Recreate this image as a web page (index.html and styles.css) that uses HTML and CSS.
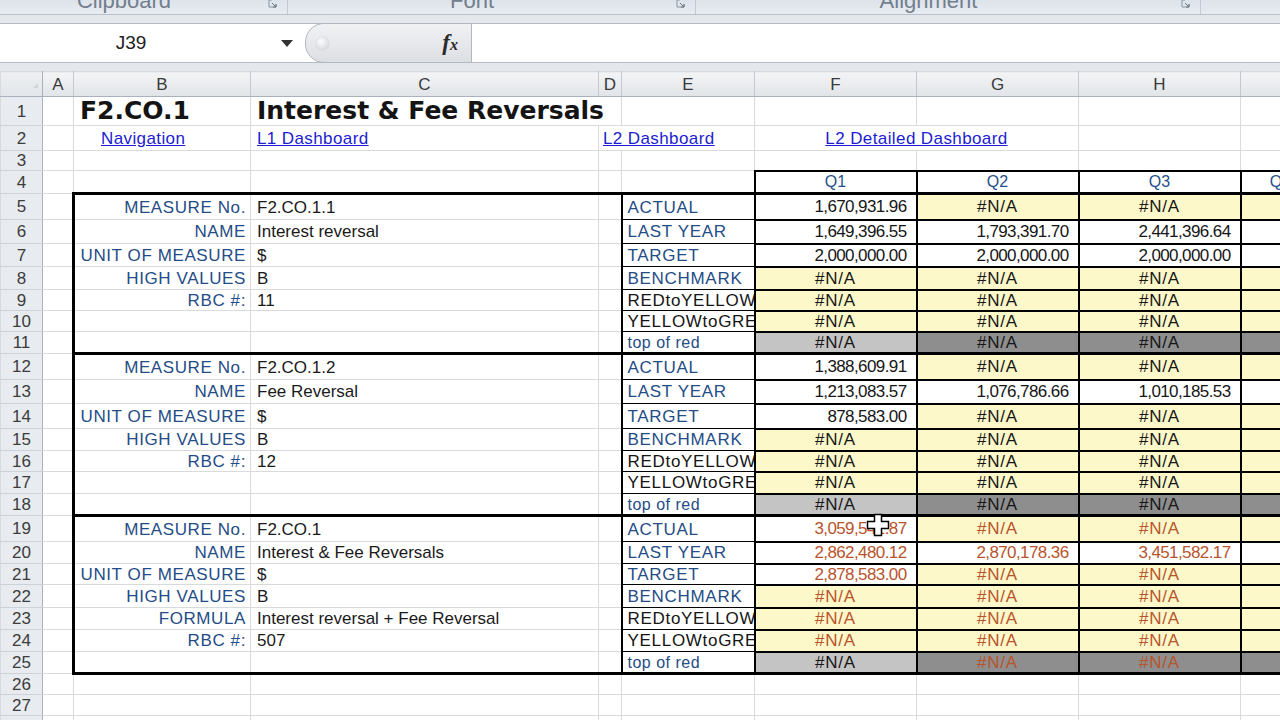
FILE: index.html
```html
<!DOCTYPE html>
<html>
<head>
<meta charset="utf-8">
<link rel="stylesheet" href="styles.css">
</head>
<body>
<div class="app">
  <div class="ribbon">
    <div class="grp g-clip"><span class="glabel">Clipboard</span><svg class="launch" viewBox="0 0 9 9"><path d="M1 1h3M1 1v7h7V5" fill="none" stroke="#8a929e" stroke-width="1"/><path d="M4 4l4 4M8 5v3H5" fill="none" stroke="#6d7582" stroke-width="1"/></svg></div>
    <div class="grp g-font"><span class="glabel">Font</span><svg class="launch" viewBox="0 0 9 9"><path d="M1 1h3M1 1v7h7V5" fill="none" stroke="#8a929e" stroke-width="1"/><path d="M4 4l4 4M8 5v3H5" fill="none" stroke="#6d7582" stroke-width="1"/></svg></div>
    <div class="grp g-align"><span class="glabel">Alignment</span><svg class="launch" viewBox="0 0 9 9"><path d="M1 1h3M1 1v7h7V5" fill="none" stroke="#8a929e" stroke-width="1"/><path d="M4 4l4 4M8 5v3H5" fill="none" stroke="#6d7582" stroke-width="1"/></svg></div>
    <div class="grp g-rest"></div>
  </div>
  <div class="gap1"></div>
  <div class="fbar">
    <div class="namebox"><span class="ref">J39</span><span class="arrow"></span></div>
    <div class="pill"><span class="dot"></span><span class="fx"><i>f</i><i class="fxx">x</i></span></div>
    <div class="finput"></div>
  </div>
  <div class="gap2"></div>
  <div class="sheet">
    <table class="grid">
      <colgroup>
        <col class="c-rh"><col class="c-a"><col class="c-b"><col class="c-c"><col class="c-d"><col class="c-e"><col class="c-f"><col class="c-g"><col class="c-h"><col class="c-i">
      </colgroup>
      <tr class="hdr">
        <td class="corner"><span class="tri"></span></td><td class="ch">A</td><td class="ch">B</td><td class="ch">C</td><td class="ch">D</td><td class="ch">E</td><td class="ch">F</td><td class="ch">G</td><td class="ch">H</td><td class="ch"></td>
      </tr>
      <tr class="h28">
        <td class="rh">1</td><td></td><td class="title">F2.CO.1</td><td class="title" colspan="2">Interest &amp; Fee Reversals</td><td></td><td></td><td></td><td></td><td></td>
      </tr>
      <tr class="h25">
        <td class="rh">2</td><td></td><td class="lnk l-nav"><u>Navigation</u></td><td class="lnk l-c"><u>L1 Dashboard</u></td><td class="lnk l-d" colspan="2"><u>L2 Dashboard</u></td><td class="lnk l-mid" colspan="2"><u>L2 Detailed Dashboard</u></td><td></td><td></td>
      </tr>
      <tr class="h20">
        <td class="rh">3</td><td></td><td></td><td></td><td></td><td></td><td></td><td></td><td></td><td></td>
      </tr>
      <tr class="h23 qrow">
        <td class="rh">4</td><td></td><td></td><td></td><td></td><td></td><td class="q">Q1</td><td class="q">Q2</td><td class="q">Q3</td><td class="q">Q4</td>
      </tr>

      <tr class="h26 blk bt">
        <td class="rh">5</td><td></td><td class="lbl">MEASURE No.</td><td class="val">F2.CO.1.1</td><td></td><td class="el">ACTUAL</td><td class="num">1,670,931.96</td><td class="na y">#N/A</td><td class="na y">#N/A</td><td class="y"></td>
      </tr>
      <tr class="h24 blk">
        <td class="rh">6</td><td></td><td class="lbl">NAME</td><td class="val">Interest reversal</td><td></td><td class="el">LAST YEAR</td><td class="num">1,649,396.55</td><td class="num">1,793,391.70</td><td class="num">2,441,396.64</td><td></td>
      </tr>
      <tr class="h23 blk">
        <td class="rh">7</td><td></td><td class="lbl">UNIT OF MEASURE</td><td class="val">$</td><td></td><td class="el">TARGET</td><td class="num">2,000,000.00</td><td class="num">2,000,000.00</td><td class="num">2,000,000.00</td><td></td>
      </tr>
      <tr class="h23 blk">
        <td class="rh">8</td><td></td><td class="lbl">HIGH VALUES</td><td class="val">B</td><td></td><td class="el">BENCHMARK</td><td class="na y">#N/A</td><td class="na y">#N/A</td><td class="na y">#N/A</td><td class="y"></td>
      </tr>
      <tr class="h21 blk">
        <td class="rh">9</td><td></td><td class="lbl">RBC #:</td><td class="val">11</td><td></td><td class="el ek">REDtoYELLOW</td><td class="na y">#N/A</td><td class="na y">#N/A</td><td class="na y">#N/A</td><td class="y"></td>
      </tr>
      <tr class="h21 blk">
        <td class="rh">10</td><td></td><td class="lbl"></td><td></td><td></td><td class="el ek">YELLOWtoGREEN</td><td class="na y">#N/A</td><td class="na y">#N/A</td><td class="na y">#N/A</td><td class="y"></td>
      </tr>
      <tr class="h22 blk">
        <td class="rh">11</td><td></td><td class="lbl"></td><td></td><td></td><td class="el small">top of red</td><td class="na g1">#N/A</td><td class="na g2">#N/A</td><td class="na g2">#N/A</td><td class="g2"></td>
      </tr>

      <tr class="h26 blk bt">
        <td class="rh">12</td><td></td><td class="lbl">MEASURE No.</td><td class="val">F2.CO.1.2</td><td></td><td class="el">ACTUAL</td><td class="num">1,388,609.91</td><td class="na y">#N/A</td><td class="na y">#N/A</td><td class="y"></td>
      </tr>
      <tr class="h24 blk">
        <td class="rh">13</td><td></td><td class="lbl">NAME</td><td class="val">Fee Reversal</td><td></td><td class="el">LAST YEAR</td><td class="num">1,213,083.57</td><td class="num">1,076,786.66</td><td class="num">1,010,185.53</td><td></td>
      </tr>
      <tr class="h25 blk">
        <td class="rh">14</td><td></td><td class="lbl">UNIT OF MEASURE</td><td class="val">$</td><td></td><td class="el">TARGET</td><td class="num">878,583.00</td><td class="na y">#N/A</td><td class="na y">#N/A</td><td class="y"></td>
      </tr>
      <tr class="h22 blk">
        <td class="rh">15</td><td></td><td class="lbl">HIGH VALUES</td><td class="val">B</td><td></td><td class="el">BENCHMARK</td><td class="na y">#N/A</td><td class="na y">#N/A</td><td class="na y">#N/A</td><td class="y"></td>
      </tr>
      <tr class="h21 blk">
        <td class="rh">16</td><td></td><td class="lbl">RBC #:</td><td class="val">12</td><td></td><td class="el ek">REDtoYELLOW</td><td class="na y">#N/A</td><td class="na y">#N/A</td><td class="na y">#N/A</td><td class="y"></td>
      </tr>
      <tr class="h22 blk">
        <td class="rh">17</td><td></td><td class="lbl"></td><td></td><td></td><td class="el ek">YELLOWtoGREEN</td><td class="na y">#N/A</td><td class="na y">#N/A</td><td class="na y">#N/A</td><td class="y"></td>
      </tr>
      <tr class="h22 blk">
        <td class="rh">18</td><td></td><td class="lbl"></td><td></td><td></td><td class="el small">top of red</td><td class="na g1">#N/A</td><td class="na g2">#N/A</td><td class="na g2">#N/A</td><td class="g2"></td>
      </tr>

      <tr class="h26 blk bt">
        <td class="rh">19</td><td></td><td class="lbl">MEASURE No.</td><td class="val">F2.CO.1</td><td></td><td class="el">ACTUAL</td><td class="num or">3,059,541.87</td><td class="na y or">#N/A</td><td class="na y or">#N/A</td><td class="y"></td>
      </tr>
      <tr class="h22 blk">
        <td class="rh">20</td><td></td><td class="lbl">NAME</td><td class="val">Interest &amp; Fee Reversals</td><td></td><td class="el">LAST YEAR</td><td class="num or">2,862,480.12</td><td class="num or">2,870,178.36</td><td class="num or">3,451,582.17</td><td></td>
      </tr>
      <tr class="h20 blk">
        <td class="rh">21</td><td></td><td class="lbl">UNIT OF MEASURE</td><td class="val">$</td><td></td><td class="el">TARGET</td><td class="num or">2,878,583.00</td><td class="na y or">#N/A</td><td class="na y or">#N/A</td><td class="y"></td>
      </tr>
      <tr class="h23 blk">
        <td class="rh">22</td><td></td><td class="lbl">HIGH VALUES</td><td class="val">B</td><td></td><td class="el">BENCHMARK</td><td class="na y or">#N/A</td><td class="na y or">#N/A</td><td class="na y or">#N/A</td><td class="y"></td>
      </tr>
      <tr class="h22 blk">
        <td class="rh">23</td><td></td><td class="lbl">FORMULA</td><td class="val">Interest reversal + Fee Reversal</td><td></td><td class="el ek">REDtoYELLOW</td><td class="na y or">#N/A</td><td class="na y or">#N/A</td><td class="na y or">#N/A</td><td class="y"></td>
      </tr>
      <tr class="h22 blk">
        <td class="rh">24</td><td></td><td class="lbl">RBC #:</td><td class="val">507</td><td></td><td class="el ek">YELLOWtoGREEN</td><td class="na y or">#N/A</td><td class="na y or">#N/A</td><td class="na y or">#N/A</td><td class="y"></td>
      </tr>
      <tr class="h22 blk bb">
        <td class="rh">25</td><td></td><td class="lbl"></td><td></td><td></td><td class="el small">top of red</td><td class="na g1">#N/A</td><td class="na g2 or">#N/A</td><td class="na g2 or">#N/A</td><td class="g2"></td>
      </tr>

      <tr class="h21">
        <td class="rh">26</td><td></td><td></td><td></td><td></td><td></td><td></td><td></td><td></td><td></td>
      </tr>
      <tr class="h21">
        <td class="rh">27</td><td></td><td></td><td></td><td></td><td></td><td></td><td></td><td></td><td></td>
      </tr>
      <tr class="h21">
        <td class="rh">28</td><td></td><td></td><td></td><td></td><td></td><td></td><td></td><td></td><td></td>
      </tr>
    </table>
  </div>
  <svg class="cursor" viewBox="0 0 24 24" width="24" height="24"><path d="M8.5 1.5h7v7h7v7h-7v7h-7v-7h-7v-7h7z" fill="#fff" stroke="#000" stroke-width="1.5" stroke-linejoin="miter"/></svg>
</div>
</body>
</html>
```

FILE: styles.css
```css
html, body {
  margin: 0;
  padding: 0;
  background: #fff;
}
body {
  font-family: "Liberation Sans", Arial, sans-serif;
}
.app {
  position: relative;
  width: 1280px;
  height: 720px;
  overflow: hidden;
  background: #fff;
}

/* ribbon group captions */
.ribbon {
  display: flex;
  height: 14px;
  overflow: hidden;
  background: linear-gradient(#dde3ea, #e8ecf1);
  border-bottom: 1px solid #b7bfca;
}
.grp {
  display: flex;
  align-items: flex-end;
  height: 14px;
  border-right: 1px solid #c2c9d3;
  box-sizing: border-box;
}
.g-clip { width: 288px; }
.g-font { width: 408px; }
.g-align { width: 505px; }
.g-rest { flex: 1; border-right: 0; }
.glabel {
  flex: 1;
  text-align: center;
  height: 26px;
  line-height: 26px;
  font-size: 22px;
  padding-right: 20px;
  color: #737e8d;
  white-space: nowrap;
}
.launch {
  align-self: flex-start;
  width: 9px;
  height: 9px;
  margin-right: 10px;
  margin-top: -1px;
}

.gap1 {
  height: 8px;
  background: #e4e8ed;
}

/* formula bar */
.fbar {
  display: flex;
  height: 38px;
  background: #fff;
  border-top: 1px solid #b4bbc5;
  border-bottom: 1px solid #b4bbc5;
}
.namebox {
  width: 305px;
  display: flex;
  align-items: center;
  background: #fff;
}
.ref {
  width: 262px;
  text-align: center;
  font-size: 19px;
  color: #222;
}
.arrow {
  margin-left: 19px;
  width: 0;
  height: 0;
  border-left: 6px solid transparent;
  border-right: 6px solid transparent;
  border-top: 7px solid #333;
}
.pill {
  width: 167px;
  box-sizing: border-box;
  display: flex;
  align-items: center;
  background: linear-gradient(#f1f2f4, #dcdfe3);
  border: 1px solid #b1b7c0;
  border-radius: 19px 0 0 19px;
  margin-top: -1px;
  margin-bottom: -1px;
}
.dot {
  width: 13px;
  height: 13px;
  margin-left: 10px;
  border-radius: 50%;
  background: radial-gradient(circle at 40% 35%, #fdfdfd, #c9ced4);
  box-shadow: 0 0 1px #a9aeb5;
}
.fx {
  margin-left: auto;
  margin-right: 13px;
  font-family: "Liberation Serif", "Times New Roman", serif;
  font-weight: bold;
  font-size: 23px;
  color: #2b2b2b;
}
.fxx {
  font-size: 16px;
}
.finput {
  flex: 1;
  background: #fff;
}

.gap2 {
  height: 8px;
  background: #e4e8ed;
}

/* sheet */
.sheet {
  width: 1280px;
  overflow: hidden;
}
.grid {
  border-collapse: collapse;
  table-layout: fixed;
  width: 1320px;
}
.c-rh { width: 42px; }
.c-a { width: 31px; }
.c-b { width: 177px; }
.c-c { width: 348px; }
.c-d { width: 23px; }
.c-e { width: 133px; }
.c-f { width: 162px; }
.c-g { width: 162px; }
.c-h { width: 162px; }
.c-i { width: 80px; }

.grid td {
  border: 1px solid #d9dadb;
  padding: 0 4px;
  font-size: 17px;
  line-height: 19px;
  vertical-align: middle;
  white-space: nowrap;
  overflow: hidden;
  color: #161616;
}

.hdr { height: 25px; }
.h20 { height: 20px; }
.h21 { height: 21px; }
.h22 { height: 22px; }
.h23 { height: 23px; }
.h24 { height: 24px; }
.h25 { height: 25px; }
.h26 { height: 26px; }
.h28 { height: 28px; }

.grid td.corner {
  background: linear-gradient(#eef0f3, #e2e5e9);
  border-right: 1px solid #a9b1bc;
  border-bottom: 1px solid #a9b1bc;
  vertical-align: bottom;
  text-align: right;
}
.tri {
  display: inline-block;
  width: 0;
  height: 0;
  margin-bottom: 4px;
  border-left: 5px solid transparent;
  border-bottom: 5px solid #cfd4da;
}
.grid td.ch {
  background: linear-gradient(#f3f4f6, #e1e4e8);
  border-right: 1px solid #c2c8d1;
  border-bottom: 1px solid #a9b1bc;
  text-align: center;
  vertical-align: middle;
  font-size: 17px;
  color: #3a3a3a;
}
.grid td.rh {
  background: #e8ebef;
  border-right: 1px solid #a9b1bc;
  border-bottom: 1px solid #cdd2d9;
  text-align: center;
  vertical-align: middle;
  font-size: 17px;
  color: #3c3c3c;
  padding: 0;
}

.grid td.title {
  font-family: "DejaVu Sans", Verdana, sans-serif;
  font-weight: bold;
  font-size: 25px;
  line-height: 28px;
  padding-left: 6px;
  color: #141414;
  vertical-align: bottom;
  overflow: visible;
}
.grid td.lnk {
  color: #1c1cd0;
  font-size: 17px;
  letter-spacing: 0.4px;
}
.grid td.l-nav { padding-left: 27px; }
.grid td.l-c { padding-left: 6px; }
.grid td.l-d { padding-left: 4px; }
.grid td.l-mid { text-align: center; }

.grid td.q {
  text-align: center;
  color: #25508c;
  font-size: 16px;
  border: 2px solid #000;
  border-bottom: 0;
}

.grid td.lbl {
  text-align: right;
  color: #244c86;
  letter-spacing: 0.6px;
  padding-right: 4px;
}
.grid td.val {
  padding-left: 6px;
  color: #1a1a1a;
}
.grid td.num {
  text-align: right;
  padding-right: 9px;
  letter-spacing: -0.6px;
}
.grid td.na {
  text-align: center;
  letter-spacing: 0.8px;
}
.grid td.or { color: #b8542c; }
.grid td.y { background: #fcf8c9; }
.grid td.g1 { background: #c4c4c4; }
.grid td.g2 { background: #8e8e8e; }

/* measure blocks */
.blk > td:nth-child(3) {
  border-left: 3px solid #000;
}
.blk > td:nth-child(6) {
  border: 1px solid #000;
  border-left: 2px solid #000;
}
.blk > td:nth-child(n+7) {
  border: 2px solid #000;
}
.grid td.el {
  color: #244c86;
  letter-spacing: 0.7px;
  padding-left: 5px;
}
.grid td.ek { color: #151515; }
.grid td.small {
  font-size: 16px;
  letter-spacing: 0.5px;
}
.bt > td:nth-child(n+3) {
  border-top: 3px solid #000;
}
.bb > td:nth-child(n+3) {
  border-bottom: 3px solid #000;
}

.cursor {
  position: absolute;
  left: 866px;
  top: 513px;
}
```
